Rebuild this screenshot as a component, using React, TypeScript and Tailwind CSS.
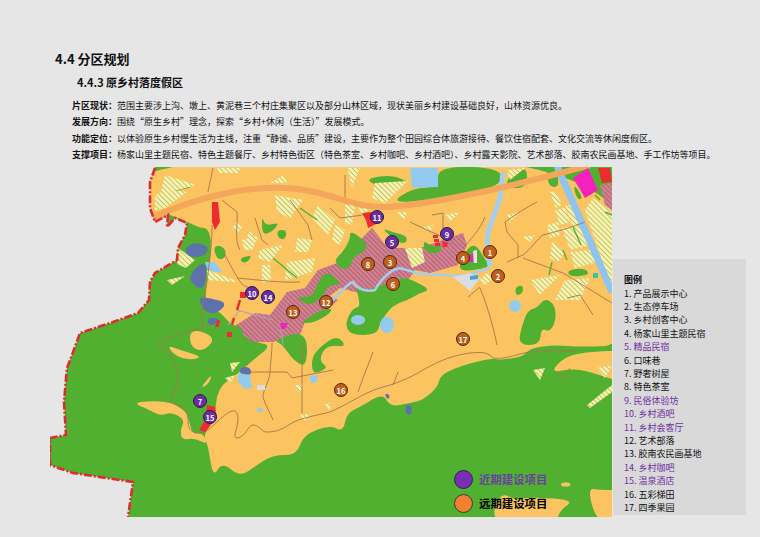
import * as React from "react";

const intro = [
  ["片区现状\uFF1A", "范围主要涉上沟、墩上、黄泥巷三个村庄集聚区以及部分山林区域\uFF0C现状美丽乡村建设基础良好\uFF0C山林资源优良。"],
  ["发展方向\uFF1A", "围绕“原生乡村”理念\uFF0C探索“乡村+休闲\uFF08生活\uFF09”发展模式。"],
  ["功能定位\uFF1A", "以体验原生乡村慢生活为主线\uFF0C注重“静谧、品质”建设\uFF0C主要作为整个田园综合体旅游接待、餐饮住宿配套、文化交流等休闲度假区。"],
  ["支撑项目\uFF1A", "杨家山里主题民宿、特色主题餐厅、乡村特色街区\uFF08特色茶室、乡村咖吧、乡村酒吧\uFF09、乡村露天影院、艺术部落、胶南农民画基地、手工作坊等项目。"],
];

const legend = [
  { text: "1. 产品展示中心" },
  { text: "2. 生态停车场" },
  { text: "3. 乡村创客中心" },
  { text: "4. 杨家山里主题民宿" },
  { text: "5. 精品民宿", near: true },
  { text: "6. 口味巷" },
  { text: "7. 野奢树屋" },
  { text: "8. 特色茶室" },
  { text: "9. 民俗体验坊", near: true },
  { text: "10. 乡村酒吧", near: true },
  { text: "11. 乡村会客厅", near: true },
  { text: "12. 艺术部落" },
  { text: "13. 胶南农民画基地" },
  { text: "14. 乡村咖吧", near: true },
  { text: "15. 温泉酒店", near: true },
  { text: "16. 五彩梯田" },
  { text: "17. 四季果园" },
];

// pins, page coordinates
const pins: [number, number, number, boolean][] = [
  [1, 490, 252, false], [2, 498, 276, false], [3, 390, 262, false], [4, 463, 258, false],
  [5, 392, 242, true], [6, 393, 284, false], [7, 200, 401, true], [8, 368, 264, false],
  [9, 447, 234, true], [10, 252, 293, true], [11, 377, 217, true], [12, 326, 302, false],
  [13, 293, 312, false], [14, 268, 297, true], [15, 210, 417, true], [16, 341, 390, false],
  [17, 463, 339, false],
];

const outline =
  "155,168 150,182 150,208 155,222 168,215 167,227 175,218 187,223 185,235 178,248 177,260 155,273 150,282 149,300 138,313 113,322 80,333 75,347 67,368 64,402 66,435 50,438 50,465 73,473 133,482 128,517";

// rounds a polygon's corners so the land parcels read as organic shapes
const blob = (points: string) => {
  const pts = points.split(" ").map((p) => p.split(",").map(Number));
  const mid = (a: number[], b: number[]) => `${(a[0] + b[0]) / 2} ${(a[1] + b[1]) / 2}`;
  let d = `M${mid(pts[pts.length - 1], pts[0])}`;
  pts.forEach((p, i) => {
    d += ` Q${p[0]} ${p[1]} ${mid(p, pts[(i + 1) % pts.length])}`;
  });
  return d + "Z";
};

const orange = [
  "130,155 630,155 630,345 580,347 555,345 530,348 523,357 498,360 493,358 463,365 440,375 438,387 423,400 410,403 390,407 383,393 360,407 347,413 343,432 330,425 303,435 297,455 273,455 257,465 240,477 222,462 213,478 208,445 203,435 215,420 217,388 240,372 253,360 272,345 253,342 233,327 220,312 207,305 205,292 207,282 212,245 208,228 200,228 188,222 175,217 168,214 155,222 130,225",
  "133,403 150,401 168,402 178,406 187,413 190,425 193,434 203,433 208,445 195,438 182,440 180,430 185,420 172,412 160,416 150,410",
  "167,345 180,350 203,357 190,360 175,356",
  "190,330 205,332 215,340 202,352 190,346",
  "200,388 213,373 208,385",
  "550,373 563,358 583,352 630,350 630,385 600,375 575,368",
  "490,525 500,492 515,500 530,497 575,500 560,510 555,525",
  "587,488 600,490 630,490 630,525 598,525",
  "560,483 570,482 571,486 562,487",
];

const green = [
  "163,182 170,182 195,187 178,190 170,195",
  "213,245 225,247 226,258 217,260",
  "262,215 265,226 280,222 272,232 262,235",
  "277,230 287,230 285,240 278,238",
  "240,258 252,255 248,262 242,263",
  "337,257 342,253 350,240 350,230 366,242 367,250 353,257 350,268 342,270 335,262",
  "297,297 313,297 320,277 330,272 342,285 328,285 325,293 313,305 303,303",
  "355,282 363,292 373,288 393,282 403,277 417,282 430,290 420,293 408,300 393,305 380,322 377,335 350,335 345,323 353,308 360,307 358,295",
  "300,323 310,317 320,310 333,308 328,315 313,323",
  "473,240 487,262 490,267 463,272 458,265",
  "438,166 503,168 500,188 430,200 390,203 413,188 438,187",
  "367,178 393,175 410,183 397,185 373,185",
  "507,178 527,165 527,188 507,188",
  "547,165 555,165 560,187 548,187",
  "423,240 432,247 442,245 440,253 425,253",
  "382,228 392,232 408,236 405,245 392,238",
  "545,298 555,305 556,320 550,332 541,328 540,345 518,345 522,325 528,310 537,308",
  "515,287 523,285 523,293 516,296",
  "283,345 273,340 307,330 307,368 293,360",
  "337,335 347,347 330,345 322,352 320,362 328,367 318,373 312,372 312,357 320,347",
  "567,270 585,268 590,275 570,277",
  "530,348 580,347 565,352 540,362",
  "575,185 583,198 578,200 574,190",
  "233,340 268,345 250,350 235,345",
  "228,322 245,330 240,340 225,335",
];

const hatch = [
  "155,195 170,190 187,192 165,208 155,210",
  "165,175 196,185 160,195",
  "217,168 240,168 238,173 220,173",
  "275,195 303,200 290,218 277,212",
  "260,250 283,245 270,262 258,258",
  "297,238 312,240 308,252 295,252",
  "287,262 315,258 312,272 285,280",
  "262,265 270,265 271,280 262,283",
  "237,222 242,228 238,232 232,228",
  "250,231 255,238 249,240 247,236",
  "178,248 195,260 186,268 177,264",
  "207,270 235,280 235,282 207,280",
  "167,280 185,276 172,285",
  "347,168 360,168 352,187",
  "375,183 408,181 385,203 372,198",
  "397,212 407,212 404,220",
  "445,215 460,212 450,222",
  "423,227 433,225 430,232",
  "405,248 422,248 425,262 412,268",
  "507,170 525,168 510,180",
  "550,192 556,192 562,205 556,208",
  "555,210 565,208 570,222 560,225",
  "547,225 558,222 560,235 550,238",
  "565,205 572,205 580,225 573,228",
  "562,228 582,225 590,245 570,250",
  "552,242 565,252 558,262 550,258",
  "570,252 592,250 597,262 575,268",
  "593,198 612,212 612,290 600,255 585,210",
  "530,280 560,275 540,295",
  "507,215 520,212 510,222",
  "523,237 535,235 530,242",
  "565,280 590,278 580,300 555,300",
  "533,370 545,368 540,380",
  "597,368 612,365 605,378",
  "587,405 612,385 612,392 590,408",
  "230,363 240,362 232,372",
  "225,378 235,375 230,383",
  "293,385 303,385 300,393",
  "323,405 330,403 330,410",
  "300,415 310,414 305,421",
  "480,280 488,272 492,280 485,285",
  "270,183 284,175 287,183",
  "318,205 335,220 328,235 312,218",
  "345,205 355,205 352,225 345,222",
  "242,240 258,236 252,250 244,250",
  "335,225 345,230 340,245 332,240",
  "355,200 370,208 362,216",
];

const pinkHatch = [
  "233,327 255,313 270,315 287,292 305,288 318,270 340,262 355,245 372,228 388,248 420,248 463,233 467,245 458,265 430,273 415,270 405,285 393,302 370,296 340,288 330,296 338,300 325,312 305,322 300,335 273,342 253,342",
  "600,185 612,183 612,210 605,205",
  "565,168 575,168 572,172",
];

const red = [
  "212,202 218,202 220,222 215,230 212,222",
  "240,292 246,292 246,298 240,298",
  "227,332 232,332 232,337 227,337",
  "362,213 373,212 380,222 368,228 366,220",
  "433,235 438,235 438,238 433,238",
  "434,239 439,239 439,242 434,242",
  "435,243 440,243 440,246 435,246",
  "442,241 448,243 447,247 443,247",
  "598,168 610,168 612,182 602,183",
  "207,405 215,407 217,417 205,432 199,430 205,420",
  "217,320 220,320 218,327 215,327",
];

const slate = [
  "185,247 197,242 210,248 203,257 187,257",
  "188,278 198,265 207,263 205,288 197,288",
  "198,297 210,298 228,303 215,315 203,310",
  "207,318 220,318 215,325 208,325",
  "240,367 250,367 252,375 240,375",
  "405,405 412,405 411,415 406,415",
  "385,393 390,395 389,399 386,398",
];

const roads = [
  "M213 168 C211 178 209 186 208 192",
  "M212 225 C212 240 210 262 205 295 C200 310 203 320 203 328 C190 331 170 336 158 342 C165 352 178 362 178 375 C178 388 172 395 170 402 C178 406 187 404 188 420 C188 428 190 432 198 433 C210 433 217 420 225 415 C232 410 238 407 238 420 C237 432 232 437 237 438 C245 438 248 425 253 425 C260 425 262 433 267 432 C275 432 282 430 290 424 C300 418 318 415 330 412 C345 406 365 392 380 388 C395 384 410 378 423 370 C440 360 455 355 470 353 C482 352 488 352 493 358 C505 360 520 353 530 352 C545 350 560 352 577 350",
  "M272 343 C272 355 270 365 270 373 C268 385 263 390 263 397 C265 405 270 412 273 420",
  "M250 372 L287 372 L292 378 L333 370",
  "M302 343 L302 413",
  "M373 352 C368 365 362 380 358 392",
  "M398 372 L393 385",
  "M222 200 L237 212 C238 225 234 240 240 250",
  "M225 255 C232 268 238 280 243 285 L253 290",
  "M237 278 C260 280 280 283 300 282",
  "M330 208 L340 218 L363 215",
  "M345 175 L345 198",
  "M410 222 L427 230 L445 238",
  "M485 217 C480 230 470 240 463 248",
  "M432 215 L443 213 L443 237",
  "M507 262 L523 255 C530 250 538 238 543 235 C555 232 570 228 585 222",
  "M523 258 L563 273 L612 303",
  "M505 222 L507 232 L518 245 L518 258",
  "M537 202 C525 208 515 215 505 222",
  "M567 298 L580 295 L593 315",
  "M480 288 C485 300 492 320 497 345",
  "M468 297 L480 287",
  "M555 372 L563 380 L570 368",
  "M255 218 L262 240 L268 245",
  "M290 200 L308 225 L312 240",
];

const MapArt = () => (
  <svg viewBox="50 167 562 350" className="block h-full w-full">
    <defs>
      <pattern id="hatch" width="3.6" height="3.6" patternUnits="userSpaceOnUse" patternTransform="rotate(-45)">
        <rect width="3.6" height="3.6" fill="#f7f3ab" />
        <rect width="0.8" height="3.6" fill="#b8b469" />
      </pattern>
      <pattern id="village" width="3.4" height="3.4" patternUnits="userSpaceOnUse" patternTransform="rotate(-45)">
        <rect width="3.4" height="3.4" fill="#b76c88" />
        <rect width="1.5" height="3.4" fill="#dd8688" />
      </pattern>
      <clipPath id="site">
        <polygon points={`${outline} 612,517 612,167 155,167`} />
      </clipPath>
    </defs>

    <g clipPath="url(#site)">
      <rect x="50" y="167" width="562" height="350" fill="#52b030" />
      {orange.map((p) => <path key={p} d={blob(p)} fill="#fbc460" />)}
      {pinkHatch.map((p) => <polygon key={p} points={p} fill="url(#village)" />)}
      {green.map((p) => <path key={p} d={blob(p)} fill="#52b030" />)}
      {hatch.map((p) => <polygon key={p} points={p} fill="url(#hatch)" />)}
      {slate.map((p) => <path key={p} d={blob(p)} fill="#5d71ad" />)}

      {/* water */}
      <polygon points="410,168 438,168 438,187 412,188" fill="#93cbf0" />
      <polygon points="205,262 215,262 222,272 215,272 208,270" fill="#93cbf0" />
      <polygon points="238,373 250,375 252,388 245,389 238,382" fill="#93cbf0" />
      <polygon points="310,376 318,375 316,383 311,383" fill="#93cbf0" />
      <ellipse cx="358" cy="320" rx="7" ry="5" fill="#93cbf0" />
      <ellipse cx="387" cy="325" rx="7" ry="8" fill="#93cbf0" />
      <ellipse cx="515" cy="306" rx="6" ry="6" fill="#93cbf0" />
      <ellipse cx="260" cy="410" rx="3" ry="2" fill="#93cbf0" />
      <path d="M557 166 L612 292" stroke="#8fc4ef" strokeWidth="7" fill="none" />
      <path d="M503 172 L500 198 L488 232 L487 250 L490 266" stroke="#a3cfee" strokeWidth="5" fill="none" />
      <path d="M490 268 L463 276 L420 274 L400 268 C390 270 382 278 375 290 C368 292 358 290 353 282 C346 284 334 300 325 308" stroke="#a3cfee" strokeWidth="2.4" fill="none" />

      {roads.map((d) => <path key={d} d={d} stroke="#a8754f" strokeWidth="0.9" fill="none" />)}
      <path d="M237 310 L273 320 M280 322 L283 345 M228 325 L240 310" stroke="#a7a3b8" strokeWidth="1.2" fill="none" />
      <path d="M152 218 C190 200 240 186 285 188 S350 208 385 207 S500 190 590 165" stroke="#f4a65a" strokeWidth="6" fill="none" />

      {/* buildings */}
      {red.map((p) => <polygon key={p} points={p} fill="#ee2b2f" />)}
      <polygon points="573,178 588,168 598,190 585,198" fill="#f422bd" />
      <polygon points="280,323 288,323 285,329 281,329" fill="#f422bd" />
      <polygon points="468,255 473,254 473,262 468,262" fill="#e626b4" />
      <polygon points="473,251 477,250 477,263 474,263" fill="#f2dbe6" />
      <polygon points="453,277 470,273 480,278 470,291" fill="#dcdde2" />
      <polygon points="470,276 478,275 478,279 470,280" fill="#3da5d9" />
      <polygon points="257,385 265,385 265,390 257,390" fill="#dcdde2" />
      <path d="M240 300 L237 310 M234 318 L232 325 M219 321 L217 327" stroke="#e5302f" strokeWidth="2.5" fill="none" />
      <path d="M605 212 L612 215 M573 227 L581 245 M563 250 L567 260 M552 262 L549 275 M273 258 L297 278 M300 208 L317 220 M595 195 L600 200" stroke="#52b030" strokeWidth="1.4" fill="none" />
      <rect x="593" y="273" width="5" height="5" fill="#3fc0a0" />
    </g>

    <polyline points={outline} fill="none" stroke="#df2b2f" strokeWidth="2.6" strokeDasharray="8 2 2 2" />
  </svg>
);

const App = () => {
  return (
    <div className="relative h-[537px] w-[760px] overflow-hidden bg-[#e6e6e6] text-[#111] font-['Noto_Sans_CJK_SC','Noto_Sans',sans-serif]">
      <h1 className="ml-[55px] pt-[49px] text-[13px] font-bold leading-[19px]">4.4 分区规划</h1>
      <h2 className="ml-[77px] mt-[6px] text-[11px] font-bold leading-[16px]">4.4.3 原乡村落度假区</h2>

      <div className="ml-[72px] mt-[8px] text-[9px] leading-[16.3px] whitespace-nowrap">
        {intro.map(([label, body]) => (
          <p key={label}>
            <span className="font-bold">{label}</span>
            {body}
          </p>
        ))}
      </div>

      <div className="ml-[50px] mt-[4px] flex items-end gap-px">
        <div className="relative h-[350px] w-[562px] shrink-0">
          <MapArt />

          {pins.map(([n, x, y, near]) => (
            <div
              key={n}
              className={
                near
                  ? "absolute flex h-[14px] w-[14px] items-center justify-center rounded-full border border-[#2b1350] bg-[#6a2ea0] text-[7.5px] font-bold text-white"
                  : "absolute flex h-[14px] w-[14px] items-center justify-center rounded-full border border-[#4f2508] bg-[#c0601e] text-[7.5px] font-bold text-white"
              }
              style={{ left: x - 57, top: y - 174 }}
            >
              {n}
            </div>
          ))}

          {/* project key on the map */}
          <div className="absolute left-[404px] top-[303px] flex flex-col gap-[5px] text-[11.4px] font-bold leading-[19px]">
            <div className="flex items-center gap-[6px] text-[#6b3fa3]">
              <span className="h-[19px] w-[19px] rounded-full border border-[#26264a] bg-[#7a2db5]" />
              近期建设项目
            </div>
            <div className="flex items-center gap-[6px] text-black">
              <span className="h-[19px] w-[19px] rounded-full border border-[#3c3c3c] bg-[#f28030]" />
              远期建设项目
            </div>
          </div>
        </div>

        <div className="mb-[2px] h-[256px] w-[133px] shrink-0 bg-[#d9d9d9] pl-[11px] pt-[14px] text-[9px] leading-[13.4px]">
          <p className="font-bold">图例</p>
          {legend.map((item) => (
            <p key={item.text} className={item.near ? "text-[#7030a0]" : ""}>
              {item.text}
            </p>
          ))}
        </div>
      </div>
    </div>
  );
};

export default App;
